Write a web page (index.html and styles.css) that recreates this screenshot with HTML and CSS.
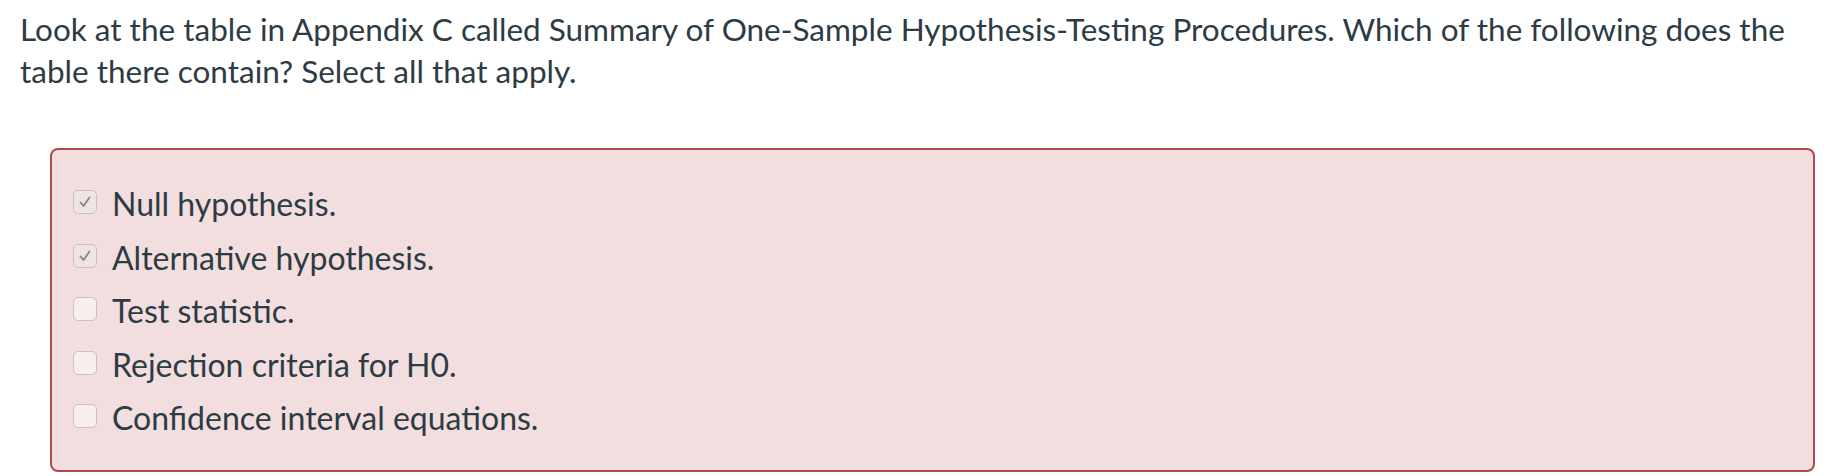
FILE: index.html
```html
<!DOCTYPE html>
<html lang="en">
<head>
    <meta charset="UTF-8">
    <title>Quiz Question</title>
    <link rel="stylesheet" href="styles.css">
</head>
<body>
    <div class="question">
        <p class="question-text">Look at the table in Appendix C called Summary of One-Sample Hypothesis-Testing Procedures. Which of the following does the table there contain? Select all that apply.</p>

        <div class="answers incorrect">
            <label class="answer">
                <span class="checkbox checked">
                    <svg viewBox="0 0 12 12" width="12" height="12"><path d="M1.5 6.5 L4.5 10 L10.5 1.5" /></svg>
                </span>
                <span class="answer-text">Null hypothesis.</span>
            </label>
            <label class="answer">
                <span class="checkbox checked">
                    <svg viewBox="0 0 12 12" width="12" height="12"><path d="M1.5 6.5 L4.5 10 L10.5 1.5" /></svg>
                </span>
                <span class="answer-text">Alternative hypothesis.</span>
            </label>
            <label class="answer">
                <span class="checkbox"></span>
                <span class="answer-text">Test statistic.</span>
            </label>
            <label class="answer">
                <span class="checkbox"></span>
                <span class="answer-text">Rejection criteria for H0.</span>
            </label>
            <label class="answer">
                <span class="checkbox"></span>
                <span class="answer-text">Confidence interval equations.</span>
            </label>
        </div>
    </div>
</body>
</html>
```

FILE: styles.css
```css
* {
    margin: 0;
    padding: 0;
    box-sizing: border-box;
}

html {
    overflow: hidden;
}

body {
    background: #ffffff;
    font-family: 'Lato', 'Open Sans', sans-serif;
    font-size: 32px;
    color: #2d3b45;
}

.question {
    padding: 9px 20px 0 20px;
}

.question-text {
    font-size: 31.5px;
    line-height: 41.5px;
}

.answers {
    margin: 56px 13px 0 30px;
    padding: 27px 21px 25px 21px;
    background: #f2dede;
    border: 2px solid #b3494a;
    border-radius: 8px;
}

.answer {
    display: flex;
    align-items: flex-start;
    height: 53.5px;
    line-height: 53.5px;
}

.checkbox {
    width: 24px;
    height: 24px;
    margin-top: 13px;
    margin-right: 15px;
    border: 1px solid #cbbfbf;
    border-radius: 5px;
    background: #f8eeee;
    display: flex;
    align-items: center;
    justify-content: center;
}

.checkbox.checked {
    background: #efe4e4;
}

.checkbox svg path {
    fill: none;
    stroke: #8a8282;
    stroke-width: 1.8;
    stroke-linecap: round;
    stroke-linejoin: round;
}
```
